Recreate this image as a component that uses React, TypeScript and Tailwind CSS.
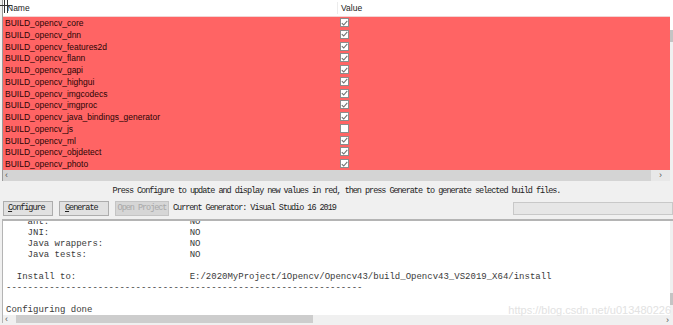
import React from "react";

const rows: [string, boolean][] = [
  ["BUILD_opencv_core", true],
  ["BUILD_opencv_dnn", true],
  ["BUILD_opencv_features2d", true],
  ["BUILD_opencv_flann", true],
  ["BUILD_opencv_gapi", true],
  ["BUILD_opencv_highgui", true],
  ["BUILD_opencv_imgcodecs", true],
  ["BUILD_opencv_imgproc", true],
  ["BUILD_opencv_java_bindings_generator", true],
  ["BUILD_opencv_js", false],
  ["BUILD_opencv_ml", true],
  ["BUILD_opencv_objdetect", true],
  ["BUILD_opencv_photo", true],
];

const outLines = [
  "    ant:                          NO",
  "    JNI:                          NO",
  "    Java wrappers:                NO",
  "    Java tests:                   NO",
  " ",
  "  Install to:                     E:/2020MyProject/1Opencv/Opencv43/build_Opencv43_VS2019_X64/install",
  "------------------------------------------------------------------",
  " ",
  "Configuring done",
];

function Check({ checked }: { checked: boolean }) {
  return (
    <span className="mt-[1px] flex h-[9px] w-[9px] items-center justify-center border border-[#8c8c8c] bg-white">
      {checked && (
        <svg width="7" height="6" viewBox="0 0 7 6">
          <path d="M0.8 3.1 L2.7 5 L6.3 0.9" stroke="#707070" strokeWidth="1.1" fill="none" />
        </svg>
      )}
    </span>
  );
}

const mono = "font-['Liberation_Mono',monospace] text-[8.5px] tracking-[-1.03px] leading-none";

export default function App() {
  return (
    <div className="relative h-[325px] w-[673px] overflow-hidden bg-[#f0f0f0] font-['Liberation_Sans',Arial,sans-serif]">
      {/* cursor */}
      <svg className="absolute left-0 top-0" width="13" height="13" viewBox="0 0 13 13">
        <path d="M4.5 0 V13 M7.5 0 V13 M0 5.5 H12" stroke="#333" strokeWidth="1" fill="none" />
      </svg>

      {/* table */}
      <div className="ml-[2px] flex h-[181px] border-l border-[#9a9a9a]">
        <div className="flex flex-1 flex-col">
          <div className="flex h-[17px] items-center border-b border-[#f2d4d4] bg-white text-[8.5px] text-[#222]">
            <div className="w-[335px] border-r border-[#ececec] pl-[4px]">Name</div>
            <div className="pl-[3px]">Value</div>
          </div>
          <div className="flex h-[153px] flex-col bg-[#ff6464]">
            {rows.map(([name, checked]) => (
              <div key={name} className="flex flex-1 items-start">
                <div className="w-[335px] pl-[2px] pt-[1px] text-[8.5px] leading-[10px] text-[#2a0404]">{name}</div>
                <div className="pl-[2px]">
                  <Check checked={checked} />
                </div>
              </div>
            ))}
          </div>
          <div className="flex h-[11px] items-center bg-[#d4d4d4]">
            <span className="w-[14px] pl-[2px] text-[9px] leading-none text-[#555]">‹</span>
            <div className="flex-1" />
            <span className="flex h-[11px] w-[19px] items-center justify-center bg-[#e8e8e8] text-[9px] leading-none text-[#555]">›</span>
          </div>
        </div>
        <div className="flex w-[3px] flex-col bg-[#f0f0f0]">
          <div className="h-[30px] bg-white" />
          <div className="h-[12px] bg-[#c4c4c4]" />
        </div>
      </div>

      {/* status text */}
      <div className={`flex h-[20px] items-center justify-center pt-[1px] text-[#222] ${mono}`}>
        Press Configure to update and display new values in red, then press Generate to generate selected build files.
      </div>

      {/* buttons row */}
      <div className={`flex h-[15px] items-center text-[#222] ${mono}`}>
        <div className="ml-[3px] flex h-[15px] w-[50px] items-center border border-[#adadad] bg-[#e1e1e1] pl-[4px]">
          <span className="underline">C</span>onfigure
        </div>
        <div className="ml-[6px] flex h-[15px] w-[50px] items-center border border-[#adadad] bg-[#e1e1e1] pl-[5px]">
          <span className="underline">G</span>enerate
        </div>
        <div className="ml-[6px] flex h-[15px] w-[54px] items-center justify-center border border-[#c4c4c4] bg-[#d6d6d6] text-[#a8a8a8]">
          Open Project
        </div>
        <div className="ml-[4px]">Current Generator: Visual Studio 16 2019</div>
        <div className="flex-1" />
        <div className="h-[13px] w-[160px] border border-[#c8c8c8] bg-[#e6e6e6]" />
      </div>

      {/* output panel */}
      <div className="ml-[2px] mt-[3px] flex h-[104px] border-l border-t-2 border-[#b4b4b4] bg-white">
        <div className="flex flex-1 flex-col overflow-hidden">
          <div className="h-[96px] overflow-hidden">
            <div className="-mt-[4px] pl-[3px] font-['Liberation_Mono',monospace] text-[9px] leading-[11px] text-[#3a3a3a]">
              {outLines.map((l, i) => (
                <div key={i} className="whitespace-pre">{l}</div>
              ))}
            </div>
          </div>
          <div className="flex h-[8px] items-start bg-[#f0f0f0]">
            <span className="w-[13px] pl-[2px] text-[9px] leading-[8px] text-[#555]">‹</span>
            <div className="h-[8px] w-[297px] bg-[#cdcdcd]" />
          </div>
        </div>
        <div className="flex w-[3px] flex-col bg-[#f0f0f0]">
          <div className="h-[72px]" />
          <div className="h-[12px] bg-[#c4c4c4]" />
        </div>
      </div>

      {/* watermark */}
      <div className="absolute right-[2px] top-[305px] text-[11px] leading-none text-[#e2e2e2]">
        https://blog.csdn.net/u013480226
      </div>
      <div className="absolute left-[666px] top-[316px] text-[9px] leading-none text-[#555]">›</div>
    </div>
  );
}
